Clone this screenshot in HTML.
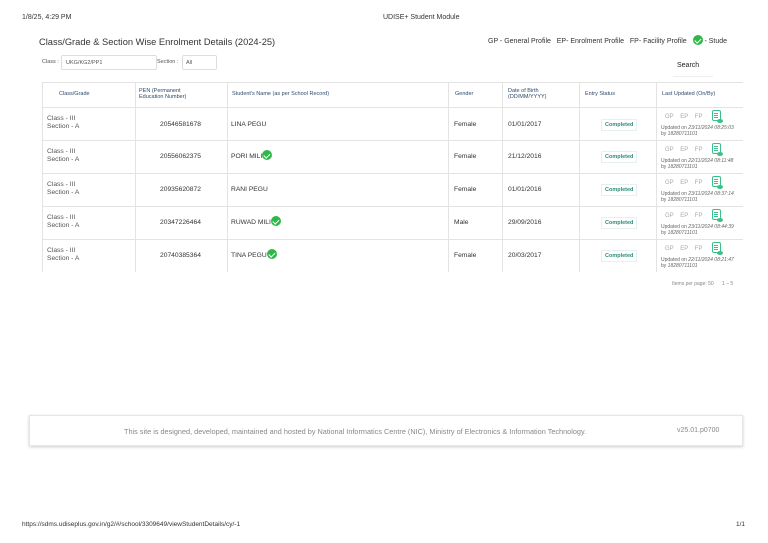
<!DOCTYPE html><html><head><meta charset="utf-8"><style>
*{margin:0;padding:0;box-sizing:border-box}
body{width:768px;height:543px;background:#fff;font-family:"Liberation Sans",sans-serif;position:relative;overflow:hidden;color:#333}
.a{position:absolute;white-space:nowrap}
.s{font-size:6.7px}
.h{font-size:5.5px;color:#2e4a6b;line-height:6px}
.ck{display:inline-block;width:10px;height:10px;border-radius:50%;background:#2fb84a;vertical-align:middle;position:relative;top:-1px}
.ck:after{content:"";position:absolute;left:3px;top:1.5px;width:2.5px;height:5px;border:solid #fff;border-width:0 1.6px 1.6px 0;transform:rotate(45deg)}
.vl{position:absolute;top:82px;height:190px;width:1px;background:#e3e3e3}
.hl{position:absolute;left:42px;width:701px;height:1px;background:#e3e3e3}
.badge{position:absolute;font-size:5.5px;color:#2a8c7a;font-weight:bold;border:1px solid #e4f2ef;padding:2px 3px}
.gp{font-size:6px;color:#aaa;font-family:"Liberation Sans",sans-serif}
.doc{position:absolute;width:9px;height:11px;border:1.3px solid #3cbf8a;border-radius:2px;background:#fff}
.doc:before{content:"";position:absolute;left:1.3px;top:2px;width:4px;height:1px;background:#3cbf8a;box-shadow:0 2px #3cbf8a,0 4px #3cbf8a}
.doc:after{content:"";position:absolute;right:-3px;bottom:-3px;width:6px;height:4px;border-radius:50%;background:#3cbf8a}
.up{font-size:5px;color:#666;line-height:6px;width:82px;overflow:hidden}
</style></head><body>
<div class="a" style="left:22px;top:14px;font-size:7px">1/8/25, 4:29 PM</div>
<div class="a" style="left:383px;top:14px;font-size:7px">UDISE+ Student Module</div>
<div class="a" style="left:39px;top:37px;font-size:9.3px;color:#333">Class/Grade &amp; Section Wise Enrolment Details (2024-25)</div>
<div class="a" style="left:488px;top:36px;font-size:7px">GP - General Profile &nbsp; EP- Enrolment Profile &nbsp; FP- Facility Profile &nbsp; <span class="ck"></span> - Stude</div>
<div class="a" style="left:42px;top:59px;font-size:5.5px;color:#555">Class :</div>
<div class="a" style="left:61px;top:55px;width:96px;height:15px;border:1px solid #ddd;border-radius:2px;font-size:5.5px;padding:4px 4px;color:#555">UKG/KG2/PP1</div>
<div class="a" style="left:157px;top:59px;font-size:5.5px;color:#555">Section :</div>
<div class="a" style="left:182px;top:55px;width:35px;height:15px;border:1px solid #ddd;border-radius:2px;font-size:5.5px;padding:4px 3px;color:#555">All</div>
<div class="a" style="left:677px;top:62px;font-size:7px;color:#222">Search</div>
<div class="a" style="left:673px;top:71px;width:40px;height:6px;border-bottom:1px solid #eee"></div>
<div class="hl" style="top:82px"></div><div class="hl" style="top:107px"></div><div class="hl" style="top:140px"></div><div class="hl" style="top:173px"></div><div class="hl" style="top:206px"></div><div class="hl" style="top:239px"></div>
<div class="vl" style="left:42px"></div><div class="vl" style="left:135px"></div><div class="vl" style="left:227px"></div><div class="vl" style="left:448px"></div><div class="vl" style="left:502px"></div><div class="vl" style="left:579px"></div><div class="vl" style="left:656px"></div>
<div class="a h" style="left:59px;top:91px">Class/Grade</div>
<div class="a h" style="left:139px;top:88px">PEN (Permanent<br>Education Number)</div>
<div class="a h" style="left:232px;top:91px">Student's Name (as per School Record)</div>
<div class="a h" style="left:455px;top:91px">Gender</div>
<div class="a h" style="left:508px;top:88px">Date of Birth<br>(DD/MM/YYYY)</div>
<div class="a h" style="left:585px;top:91px">Entry Status</div>
<div class="a h" style="left:662px;top:91px">Last Updated (On/By)</div>

<div class="a s" style="left:47px;top:115px;line-height:8px;color:#555">Class - III<br>Section - A</div>
<div class="a s" style="left:160px;top:121px">20546581678</div>
<div class="a s" style="left:231px;top:121px">LINA PEGU</div>
<div class="a s" style="left:454px;top:121px">Female</div>
<div class="a s" style="left:508px;top:121px">01/01/2017</div>
<div class="badge" style="left:601px;top:119px">Completed</div>
<div class="a gp" style="left:665px;top:114px">GP &nbsp;&nbsp; EP &nbsp;&nbsp; FP</div><div class="doc" style="left:712px;top:110px"></div>
<div class="a up" style="left:661px;top:125px">Updated on <i>23/11/2024 08:25:03</i><br>by <i>18280711101</i></div>

<div class="a s" style="left:47px;top:148px;line-height:8px;color:#555">Class - III<br>Section - A</div>
<div class="a s" style="left:160px;top:153px">20556062375</div>
<div class="a s" style="left:231px;top:151px">PORI MILI<span class="ck"></span></div>
<div class="a s" style="left:454px;top:153px">Female</div>
<div class="a s" style="left:508px;top:153px">21/12/2016</div>
<div class="badge" style="left:601px;top:151px">Completed</div>
<div class="a gp" style="left:665px;top:147px">GP &nbsp;&nbsp; EP &nbsp;&nbsp; FP</div><div class="doc" style="left:712px;top:143px"></div>
<div class="a up" style="left:661px;top:158px">Updated on <i>22/11/2024 08:11:48</i><br>by <i>18280711101</i></div>

<div class="a s" style="left:47px;top:181px;line-height:8px;color:#555">Class - III<br>Section - A</div>
<div class="a s" style="left:160px;top:186px">20935620872</div>
<div class="a s" style="left:231px;top:186px">RANI PEGU</div>
<div class="a s" style="left:454px;top:186px">Female</div>
<div class="a s" style="left:508px;top:186px">01/01/2016</div>
<div class="badge" style="left:601px;top:184px">Completed</div>
<div class="a gp" style="left:665px;top:180px">GP &nbsp;&nbsp; EP &nbsp;&nbsp; FP</div><div class="doc" style="left:712px;top:176px"></div>
<div class="a up" style="left:661px;top:191px">Updated on <i>23/11/2024 08:37:14</i><br>by <i>18280711101</i></div>

<div class="a s" style="left:47px;top:214px;line-height:8px;color:#555">Class - III<br>Section - A</div>
<div class="a s" style="left:160px;top:219px">20347226464</div>
<div class="a s" style="left:231px;top:217px">RUWAD MILI<span class="ck"></span></div>
<div class="a s" style="left:454px;top:219px">Male</div>
<div class="a s" style="left:508px;top:219px">29/09/2016</div>
<div class="badge" style="left:601px;top:217px">Completed</div>
<div class="a gp" style="left:665px;top:213px">GP &nbsp;&nbsp; EP &nbsp;&nbsp; FP</div><div class="doc" style="left:712px;top:209px"></div>
<div class="a up" style="left:661px;top:224px">Updated on <i>23/11/2024 08:44:39</i><br>by <i>18280711101</i></div>

<div class="a s" style="left:47px;top:247px;line-height:8px;color:#555">Class - III<br>Section - A</div>
<div class="a s" style="left:160px;top:252px">20740385364</div>
<div class="a s" style="left:231px;top:250px">TINA PEGU<span class="ck"></span></div>
<div class="a s" style="left:454px;top:252px">Female</div>
<div class="a s" style="left:508px;top:252px">20/03/2017</div>
<div class="badge" style="left:601px;top:250px">Completed</div>
<div class="a gp" style="left:665px;top:246px">GP &nbsp;&nbsp; EP &nbsp;&nbsp; FP</div><div class="doc" style="left:712px;top:242px"></div>
<div class="a up" style="left:661px;top:257px">Updated on <i>22/11/2024 08:21:47</i><br>by <i>18280711101</i></div>

<div class="a" style="left:672px;top:281px;font-size:5px;color:#888">Items per page: 50 &nbsp;&nbsp;&nbsp;&nbsp; 1 – 5</div>
<div class="a" style="left:29px;top:415px;width:714px;height:31px;border:1px solid #e6e6e6;box-shadow:0 1px 3px rgba(0,0,0,.2)"></div>
<div class="a" style="left:124px;top:427px;font-size:7.3px;color:#888">This site is designed, developed, maintained and hosted by National Informatics Centre (NIC), Ministry of Electronics &amp; Information Technology.</div>
<div class="a" style="left:677px;top:427px;font-size:7px;color:#888">v25.01.p0700</div>
<div class="a" style="left:22px;top:521px;font-size:6.5px">https://sdms.udiseplus.gov.in/g2/#/school/3309649/viewStudentDetails/cy/-1</div>
<div class="a" style="left:736px;top:521px;font-size:6.5px">1/1</div>
</body></html>
